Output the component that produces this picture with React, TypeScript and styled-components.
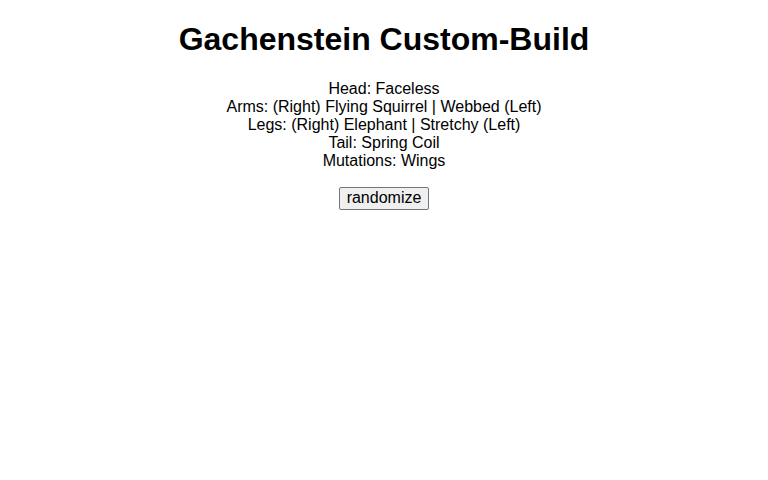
import React from "react";
import styled, { createGlobalStyle } from "styled-components";

const Global = createGlobalStyle`
  body {
    margin: 8px;
    font-family: "Liberation Sans", Arial, sans-serif;
    color: #000;
    background: #fff;
  }
`;

const Page = styled.main`
  display: flex;
  flex-direction: column;
  align-items: center;
  text-align: center;
`;

const Title = styled.h1`
  font-size: 32px;
  font-weight: bold;
  margin: 13.44px 0 21.44px;
`;

const Parts = styled.div`
  font-size: 16px;
  line-height: 18px;
`;

const Line = styled.div``;

const Button = styled.button`
  margin-top: 17px;
  font-family: "Liberation Sans", Arial, sans-serif;
  font-size: 16px;
  padding: 1px 7px;
  height: 23px;
  background: #efefef;
  border: 1px solid #767676;
  border-radius: 2px;
  color: #000;
  line-height: 18px;
`;

const parts = [
  "Head: Faceless",
  "Arms: (Right) Flying Squirrel | Webbed (Left)",
  "Legs: (Right) Elephant | Stretchy (Left)",
  "Tail: Spring Coil",
  "Mutations: Wings",
];

export default function App() {
  return (
    <>
      <Global />
      <Page>
        <Title>Gachenstein Custom-Build</Title>
        <Parts>
          {parts.map((p) => (
            <Line key={p}>{p}</Line>
          ))}
        </Parts>
        <Button>randomize</Button>
      </Page>
    </>
  );
}
